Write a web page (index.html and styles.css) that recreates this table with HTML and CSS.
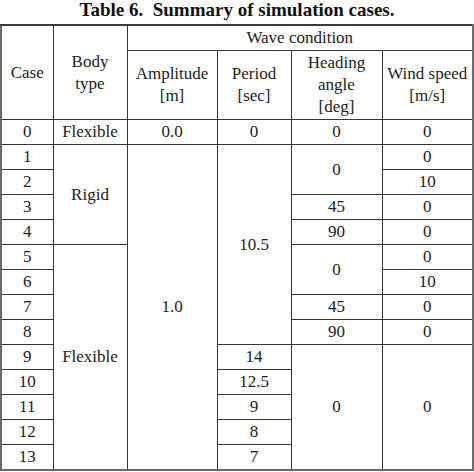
FILE: index.html
```html
<!doctype html>
<html lang="en">
<head>
    <meta charset="UTF-8">
    <title>Table 6</title>
    <link rel="stylesheet" href="styles.css">
</head>
<body>

    <div id="frame">

        <h1>Table 6.&nbsp; Summary of simulation cases.</h1>

        <table class="cases">
            <colgroup>
                <col class="c-case">
                <col class="c-body">
                <col class="c-amp">
                <col class="c-period">
                <col class="c-head">
                <col class="c-wind">
            </colgroup>
            <thead>
                <tr class="h1">
                    <th rowspan="2">Case</th>
                    <th rowspan="2">Body<br>type</th>
                    <th colspan="4">Wave condition</th>
                </tr>
                <tr class="h2">
                    <th>Amplitude<br>[m]</th>
                    <th>Period<br>[sec]</th>
                    <th>Heading<br>angle<br>[deg]</th>
                    <th>Wind speed<br>[m/s]</th>
                </tr>
            </thead>
            <tbody>
                <tr>
                    <td>0</td>
                    <td>Flexible</td>
                    <td>0.0</td>
                    <td>0</td>
                    <td>0</td>
                    <td>0</td>
                </tr>
                <tr>
                    <td>1</td>
                    <td rowspan="4">Rigid</td>
                    <td rowspan="13">1.0</td>
                    <td rowspan="8">10.5</td>
                    <td rowspan="2">0</td>
                    <td>0</td>
                </tr>
                <tr>
                    <td>2</td>
                    <td>10</td>
                </tr>
                <tr>
                    <td>3</td>
                    <td>45</td>
                    <td>0</td>
                </tr>
                <tr>
                    <td>4</td>
                    <td>90</td>
                    <td>0</td>
                </tr>
                <tr>
                    <td>5</td>
                    <td rowspan="9">Flexible</td>
                    <td rowspan="2">0</td>
                    <td>0</td>
                </tr>
                <tr>
                    <td>6</td>
                    <td>10</td>
                </tr>
                <tr>
                    <td>7</td>
                    <td>45</td>
                    <td>0</td>
                </tr>
                <tr>
                    <td>8</td>
                    <td>90</td>
                    <td>0</td>
                </tr>
                <tr>
                    <td>9</td>
                    <td>14</td>
                    <td rowspan="5">0</td>
                    <td rowspan="5">0</td>
                </tr>
                <tr>
                    <td>10</td>
                    <td>12.5</td>
                </tr>
                <tr>
                    <td>11</td>
                    <td>9</td>
                </tr>
                <tr>
                    <td>12</td>
                    <td>8</td>
                </tr>
                <tr>
                    <td>13</td>
                    <td>7</td>
                </tr>
            </tbody>
        </table>

    </div>

</body>
</html>
```

FILE: styles.css
```css
body{
    font-family: "Liberation Serif", "DejaVu Serif", serif;
    font-size: 17px;
    background-color: #fff;
    color: #222;
    margin: 0;
}

#frame{
    width: 474px;
}

h1{
    font-size: 19px;
    font-weight: bold;
    line-height: 19px;
    text-align: center;
    color: #111;
    margin: 0 0 5px 0;
}

.cases{
    border-collapse: collapse;
    table-layout: fixed;
    width: 473px;
    font-family: "Liberation Serif", "DejaVu Serif", serif;
    font-weight: 400;
    border-top: 2px solid #3a3a3a;
    border-left: 2px solid #6a6a6a;
    border-right: 2px solid #6a6a6a;
    border-bottom: 2px solid #6a6a6a;
}

.c-case   { width: 52px; }
.c-body   { width: 74px; }
.c-amp    { width: 90px; }
.c-period { width: 74px; }
.c-head   { width: 91px; }
.c-wind   { width: 91px; }

.cases th,
.cases td{
    font-family: "Liberation Serif", "DejaVu Serif", serif;
    border: 1px solid #333;
    padding: 0;
    text-align: center;
    vertical-align: middle;
    font-weight: 400;
    line-height: 22px;
}

.cases tr.h1 th:last-child{
    height: 24px;
}

.cases tr.h2 th{
    height: 68px;
}

.cases td{
    height: 24px;
}
```
